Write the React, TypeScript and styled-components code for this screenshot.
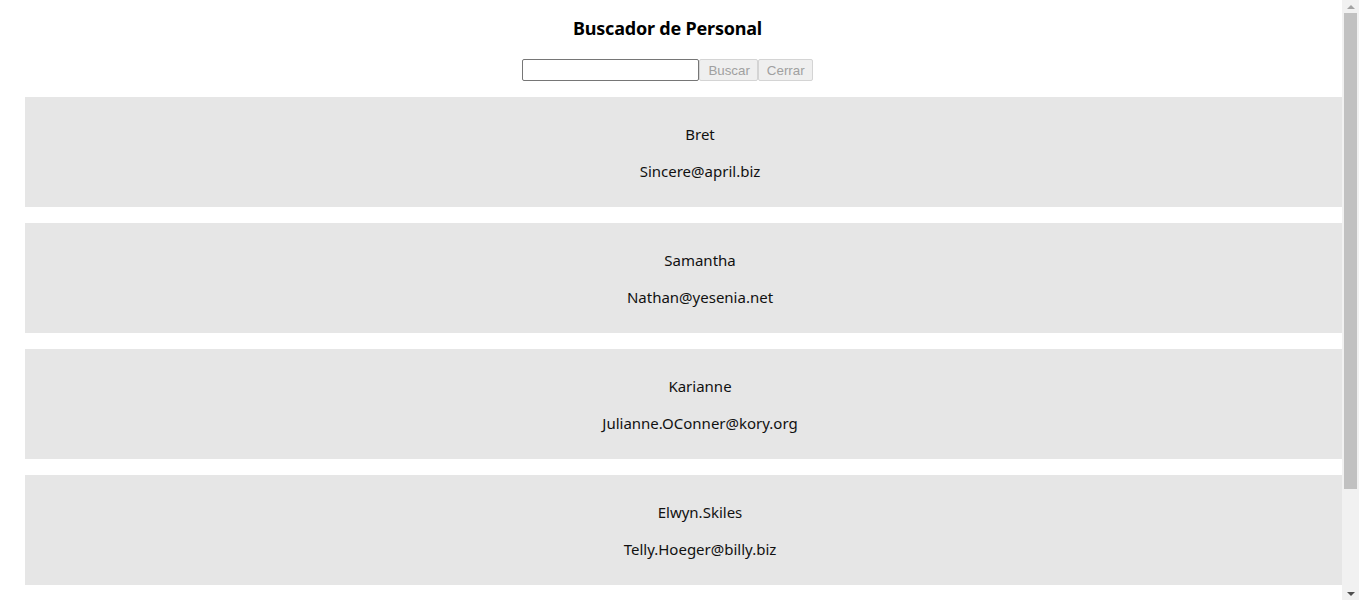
import * as React from "react";
import styled, { createGlobalStyle } from "styled-components";

interface Person {
  username: string;
  email: string;
}

const people: Person[] = [
  { username: "Bret", email: "Sincere@april.biz" },
  { username: "Samantha", email: "Nathan@yesenia.net" },
  { username: "Karianne", email: "Julianne.OConner@kory.org" },
  { username: "Elwyn.Skiles", email: "Telly.Hoeger@billy.biz" },
  { username: "Delphine", email: "Chaim_McDermott@dana.io" },
];

const App: React.FC = () => {
  const [query, setQuery] = React.useState("");

  return (
    <Shell>
      <GlobalStyle />
      <Main>
        <Header>
          <Title>Buscador de Personal</Title>
          <SearchBar>
            <SearchInput
              type="text"
              value={query}
              onChange={(e) => setQuery(e.target.value)}
            />
            <ActionButton disabled>Buscar</ActionButton>
            <ActionButton disabled>Cerrar</ActionButton>
          </SearchBar>
        </Header>
        <List>
          {people.map((p) => (
            <Card key={p.username}>
              <CardText>{p.username}</CardText>
              <CardText>{p.email}</CardText>
            </Card>
          ))}
        </List>
      </Main>
      {/* classic scrollbar look, since the headless browser hides its own */}
      <ScrollRail aria-hidden>
        <ArrowCell>
          <Arrow $dir="up" />
        </ArrowCell>
        <Track>
          <Thumb />
        </Track>
        <ArrowCell>
          <Arrow $dir="down" />
        </ArrowCell>
      </ScrollRail>
    </Shell>
  );
};

export default App;

const GlobalStyle = createGlobalStyle`
  html {
    overflow-x: hidden;
  }
  body {
    margin: 0;
    font-family: "Noto Sans", "Open Sans", sans-serif;
    background: #fff;
  }
`;

const Shell = styled.div`
  display: flex;
  align-items: flex-start;
`;

const Main = styled.div`
  flex: 1;
  min-width: 0;
  overflow: hidden;
  display: flex;
  flex-direction: column;
  padding-top: 16px;
`;

const Header = styled.div`
  display: flex;
  flex-direction: column;
  align-items: center;
  padding-right: 7px;
`;

const Title = styled.h1`
  margin: 0;
  font: 700 18px/24px "Noto Sans", sans-serif;
  letter-spacing: -0.2px;
  color: #000;
`;

const SearchBar = styled.div`
  display: flex;
  margin-top: 19px;
  margin-bottom: 16px;
`;

const SearchInput = styled.input`
  width: 177px;
  height: 22px;
  box-sizing: border-box;
  border: 1px solid #767676;
  border-radius: 2px;
  padding: 1px 2px;
  font: 13.33px "Liberation Sans", Arial, sans-serif;
`;

const ActionButton = styled.button`
  height: 22px;
  box-sizing: border-box;
  padding: 1px 7px 1px 8px;
  border: 1px solid #d4d4d4;
  border-radius: 2px;
  background: #efefef;
  color: #a0a0a0;
  font: 13.33px "Liberation Sans", Arial, sans-serif;
`;

const List = styled.div`
  display: flex;
  flex-direction: column;
  gap: 16px;
  margin-left: 25px;
  width: 1350px;
  flex-shrink: 0;
  padding-bottom: 11px;
`;

const Card = styled.div`
  background: #e6e6e6;
  padding: 11px 0 9px;
  text-align: center;
  display: flex;
  flex-direction: column;
  gap: 16px;
`;

const CardText = styled.p`
  margin: 0;
  font-size: 15px;
  line-height: 21px;
  color: #111;
  &:first-child {
    margin-top: 16px;
  }
  &:last-child {
    margin-bottom: 16px;
  }
`;

const ScrollRail = styled.div`
  position: sticky;
  top: 0;
  width: 17px;
  height: 100vh;
  flex-shrink: 0;
  background: #f1f1f1;
  display: flex;
  flex-direction: column;
`;

const ArrowCell = styled.div`
  height: 13px;
  flex-shrink: 0;
  display: flex;
  align-items: center;
  justify-content: center;
`;

const Arrow = styled.div<{ $dir: "up" | "down" }>`
  width: 0;
  height: 0;
  border-left: 4px solid transparent;
  border-right: 4px solid transparent;
  ${({ $dir }) =>
    $dir === "up"
      ? "border-bottom: 4px solid #a3a3a3;"
      : "border-top: 4px solid #505050;"}
`;

const Track = styled.div`
  flex: 1;
  padding: 0 2px;
`;

const Thumb = styled.div`
  height: 476px;
  background: #c1c1c1;
`;
